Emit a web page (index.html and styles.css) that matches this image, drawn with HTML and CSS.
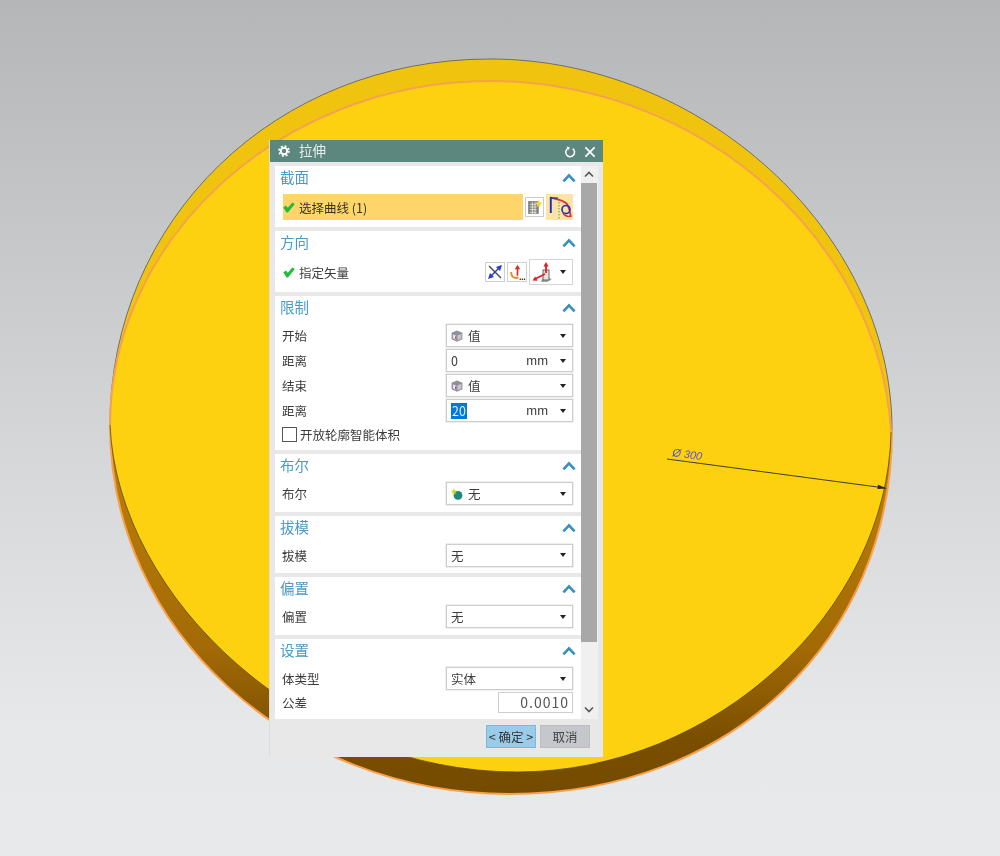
FILE: index.html
```html
<!DOCTYPE html>
<html lang="zh-CN">
<head>
    <meta charset="UTF-8">
    <meta name="viewport" content="width=device-width, initial-scale=1.0">
    <title>拉伸</title>
    <link rel="stylesheet" href="styles.css">
</head>
<body>

    <svg width="0" height="0" class="defs">
        <symbol id="check" viewBox="0 0 12 11">
            <path d="M0.3 5.6 L2.9 3.6 L4.8 5.8 L9.4 0.4 L11.8 2 L5 10.6 L3.6 10.6 Z" fill="#1fbb3a"/>
        </symbol>
        <symbol id="chevron" viewBox="0 0 14 10">
            <path d="M1.4 8.4 L7 2.4 L12.6 8.4" fill="none" stroke="#3a8fbb" stroke-width="2.7"/>
        </symbol>
        <symbol id="cube" viewBox="0 0 12 12">
            <path d="M6 0.4 L11.4 2.8 L11.4 9.2 L6 11.8 L0.6 9.2 L0.6 2.8 Z" fill="#8f9096"/>
            <path d="M1.6 3.8 L5.6 5.6 L5.6 10.4 L1.6 8.6 Z" fill="#eceaf0" stroke="#6d7fa8" stroke-width="0.6"/>
            <path d="M6.4 5.6 L10.4 3.8 L10.4 8.6 L6.4 10.4 Z" fill="#c2c6d0"/>
            <path d="M4 6.2 L5.4 6.8 L5.4 9.4 L4 8.8 Z" fill="#d9493f"/>
        </symbol>
    </svg>

    <!-- model behind the dialog -->
    <svg class="scene" width="1000" height="856" viewBox="0 0 1000 856">
        <defs>
            <linearGradient id="sky" x1="0" y1="0" x2="0" y2="1">
                <stop offset="0" stop-color="#b5b6b8"/>
                <stop offset="0.5" stop-color="#d4d5d7"/>
                <stop offset="0.85" stop-color="#e7e8ea"/>
                <stop offset="1" stop-color="#e8e9eb"/>
            </linearGradient>
            <linearGradient id="side" x1="0" y1="430" x2="0" y2="794" gradientUnits="userSpaceOnUse">
                <stop offset="0" stop-color="#c08204"/>
                <stop offset="0.6" stop-color="#a36a05"/>
                <stop offset="0.85" stop-color="#7a4e00"/>
                <stop offset="1" stop-color="#744b00"/>
            </linearGradient>
        </defs>
        <rect width="1000" height="856" fill="url(#sky)"/>
        <g class="soft">
            <!-- lower side wall -->
            <path d="M892 430 C892 640 730 794 510 794 C290 794 110 630 110 425 Z" fill="url(#side)"/>
            <path d="M892 430 C892 640 730 794 510 794 C290 794 110 630 110 425" fill="none" stroke="#f8a04a" stroke-width="2"/>
            <!-- upper band -->
            <path d="M110 425 C110 220 275 59 490 59 C700 59 892 230 892 430 Z" fill="#f0c40e"/>
            <path d="M110 425 C110 220 275 59 490 59 C700 59 892 230 892 430" fill="none" stroke="#6e6e66" stroke-width="1"/>
            <!-- front face -->
            <path d="M110 425 C110 240 280 81 490 81 C700 81 880 240 891 432 C888 610 715 772 517 772 C305 772 118 600 110 425 Z" fill="#fed110"/>
            <path d="M110 425 C110 240 280 81 490 81 C700 81 880 240 891 432" fill="none" stroke="#f4a24e" stroke-width="2"/>
            <path d="M891 432 C888 610 715 772 517 772 C305 772 118 600 110 425" fill="none" stroke="#5a4a10" stroke-width="0.8"/>
            <!-- dimension -->
            <line x1="667" y1="459" x2="885" y2="488" stroke="#3d3d2e" stroke-width="1"/>
            <path d="M887 488.4 L878 484.8 L877.4 489 Z" fill="#1f2a3a"/>
            <text x="672" y="456" class="dim" transform="rotate(8 672 456)">Ø 300</text>
        </g>
    </svg>

    <div class="dialog">
        <div class="titlebar">
            <svg class="gear" width="12" height="12" viewBox="0 0 12 12">
                <circle cx="6" cy="6" r="3.2" fill="none" stroke="#fff" stroke-width="2"/>
                <circle cx="6" cy="6" r="5" fill="none" stroke="#fff" stroke-width="1.6" stroke-dasharray="2 1.93"/>
            </svg>
            <span class="title-text">拉伸</span>
            <svg class="title-btn" width="12" height="12" viewBox="0 0 12 12">
                <path d="M4 2.4 A4.4 4.4 0 1 0 8.6 2.6" fill="none" stroke="#fff" stroke-width="1.5"/>
                <path d="M2.6 0.6 L6 1.6 L4 4.6 Z" fill="#fff"/>
            </svg>
            <svg class="title-btn" width="12" height="12" viewBox="0 0 12 12">
                <path d="M1.4 1.4 L10.6 10.6 M10.6 1.4 L1.4 10.6" fill="none" stroke="#fff" stroke-width="1.8"/>
            </svg>
        </div>

        <div class="dialog-body">
            <div class="panels">

                <section class="group">
                    <div class="group-head">截面<svg class="chev"><use href="#chevron"/></svg></div>
                    <div class="pick-row">
                        <div class="pick-bar">
                            <svg class="check"><use href="#check"/></svg>
                            <span>选择曲线 (1)</span>
                        </div>
                        <div class="tool-btn">
                            <svg width="17" height="17" viewBox="0 0 16 16">
                                <rect x="2" y="2" width="10" height="12" fill="#7f837c"/>
                                <path d="M3.5 5 H10 M3.5 7.5 H10 M3.5 10 H10 M3.5 12.5 H10 M6 3 V14 M8.5 3 V14" stroke="#e8e8e0" stroke-width="0.8"/>
                                <path d="M12 0.6 L13 3 L15.4 3.6 L13.4 5.2 L14 7.6 L12 6.2 L10 7.6 L10.6 5.2 L8.6 3.6 L11 3 Z" fill="#f4d83a"/>
                            </svg>
                        </div>
                        <div class="curve-btn">
                            <svg width="27" height="26" viewBox="0 0 27 26">
                                <path d="M13 8 V25" stroke="#6fae55" stroke-width="1.2" stroke-dasharray="1.6 1.4"/>
                                <path d="M4 3.5 C10 5 18 6 21 10 C23 13 24 18 25 23" stroke="#d8343a" stroke-width="1.7" fill="none"/>
                                <path d="M4.8 3 V19" stroke="#1f2db8" stroke-width="1.9" fill="none"/>
                                <path d="M4 4 H12" stroke="#1f2db8" stroke-width="1.2" fill="none"/>
                                <circle cx="20" cy="15.5" r="4" stroke="#1f2db8" stroke-width="1.6" fill="none"/>
                                <path d="M17 19 C19 22 22 23 25 22" stroke="#d8343a" stroke-width="1.5" fill="none"/>
                            </svg>
                        </div>
                    </div>
                </section>

                <section class="group">
                    <div class="group-head">方向<svg class="chev"><use href="#chevron"/></svg></div>
                    <div class="vector-row">
                        <svg class="check"><use href="#check"/></svg>
                        <span class="vector-text">指定矢量</span>
                        <div class="small-btn">
                            <svg width="16" height="16" viewBox="0 0 16 16">
                                <path d="M2 2 L14 14" stroke="#4a4a4a" stroke-width="1.4"/>
                                <path d="M14 2 L3 13" stroke="#2240c8" stroke-width="1.4"/>
                                <path d="M15 1 L9 3 L13 7 Z M1 15 L3 9 L7 13 Z" fill="#2240c8"/>
                            </svg>
                        </div>
                        <div class="small-btn">
                            <svg width="17" height="17" viewBox="0 0 16 16">
                                <path d="M8 11 V4" stroke="#d8302a" stroke-width="1.6"/>
                                <path d="M8 0.6 L5.4 5 H10.6 Z" fill="#d8302a"/>
                                <path d="M2 7.5 C2 12 5 14 9 12.6" stroke="#f08a2a" stroke-width="1.9" fill="none"/>
                                <path d="M10 14.4 H11.2 M12 14.4 H13.2 M14 14.4 H15.2" stroke="#333" stroke-width="1.3"/>
                            </svg>
                        </div>
                        <div class="vector-drop">
                            <svg width="24" height="24" viewBox="0 0 24 24">
                                <path d="M11 19 L15 17 L21 19 L16 22 L10 22 Z" fill="#9fa29a"/>
                                <rect x="12" y="10" width="6" height="10" fill="#e4e4de" stroke="#666" stroke-width="1"/>
                                <path d="M15 13 V5" stroke="#d8202a" stroke-width="1.8"/>
                                <path d="M15 2 L12.4 6.6 H17.6 Z" fill="#d8202a"/>
                                <path d="M14 14 L4 19" stroke="#d8202a" stroke-width="1.8"/>
                                <path d="M1.5 20.5 L6.6 20.8 L4.2 16.6 Z" fill="#d8202a"/>
                            </svg>
                            <i class="arrow"></i>
                        </div>
                    </div>
                </section>

                <section class="group">
                    <div class="group-head">限制<svg class="chev"><use href="#chevron"/></svg></div>
                    <div class="field-list">
                        <div class="field">
                            <label>开始</label>
                            <div class="drop"><svg class="drop-icon"><use href="#cube"/></svg><span>值</span><i class="arrow"></i></div>
                        </div>
                        <div class="field">
                            <label>距离</label>
                            <div class="drop"><span>0</span><span class="unit">mm</span><i class="arrow"></i></div>
                        </div>
                        <div class="field">
                            <label>结束</label>
                            <div class="drop"><svg class="drop-icon"><use href="#cube"/></svg><span>值</span><i class="arrow"></i></div>
                        </div>
                        <div class="field">
                            <label>距离</label>
                            <div class="drop"><span class="selected">20</span><span class="unit">mm</span><i class="arrow"></i></div>
                        </div>
                    </div>
                    <div class="check-row">
                        <span class="checkbox"></span>
                        <span>开放轮廓智能体积</span>
                    </div>
                </section>

                <section class="group single">
                    <div class="group-head">布尔<svg class="chev"><use href="#chevron"/></svg></div>
                    <div class="field">
                        <label>布尔</label>
                        <div class="drop">
                            <svg class="drop-icon" viewBox="0 0 12 12">
                                <circle cx="7" cy="7.4" r="4.4" fill="#1f8a76"/>
                                <path d="M3 0.2 L3.9 2.4 L6.2 2.8 L4.4 4.2 L4.8 6.6 L3 5.2 L1.2 6.6 L1.6 4.2 L-0.2 2.8 L2.1 2.4 Z" fill="#c6d92e"/>
                            </svg>
                            <span>无</span><i class="arrow"></i>
                        </div>
                    </div>
                </section>

                <section class="group single">
                    <div class="group-head">拔模<svg class="chev"><use href="#chevron"/></svg></div>
                    <div class="field">
                        <label>拔模</label>
                        <div class="drop"><span>无</span><i class="arrow"></i></div>
                    </div>
                </section>

                <section class="group single">
                    <div class="group-head">偏置<svg class="chev"><use href="#chevron"/></svg></div>
                    <div class="field">
                        <label>偏置</label>
                        <div class="drop"><span>无</span><i class="arrow"></i></div>
                    </div>
                </section>

                <section class="group">
                    <div class="group-head">设置<svg class="chev"><use href="#chevron"/></svg></div>
                    <div class="field-list">
                        <div class="field">
                            <label>体类型</label>
                            <div class="drop"><span>实体</span><i class="arrow"></i></div>
                        </div>
                        <div class="field">
                            <label>公差</label>
                            <div class="num-box">0.0010</div>
                        </div>
                    </div>
                </section>

            </div>

            <div class="scrollbar">
                <svg class="scroll-arrow" width="17" height="17" viewBox="0 0 17 17">
                    <path d="M4 10.5 L8 6.5 L12 10.5" fill="none" stroke="#555" stroke-width="1.6"/>
                </svg>
                <div class="scroll-thumb"></div>
                <svg class="scroll-arrow bottom" width="17" height="17" viewBox="0 0 17 17">
                    <path d="M4 5.5 L8 9.5 L12 5.5" fill="none" stroke="#555" stroke-width="1.6"/>
                </svg>
            </div>
        </div>

        <div class="footer">
            <button class="btn primary">&lt; 确定 &gt;</button>
            <button class="btn">取消</button>
        </div>
    </div>

</body>
</html>
```

FILE: styles.css
```css
html, body {
    margin: 0;
    padding: 0;
}
body {
    width: 1000px;
    height: 856px;
    overflow: hidden;
    position: relative;
    font-family: "Noto Sans CJK SC", "Noto Sans", sans-serif;
    font-size: 12.5px;
    color: #3c3c3c;
}
.defs {
    position: absolute;
}
.scene {
    position: absolute;
    left: 0;
    top: 0;
    display: block;
}
.soft {
    filter: blur(0.4px);
}
.dim {
    font-family: "Liberation Sans", sans-serif;
    font-style: italic;
    font-size: 11px;
    fill: #5a50d8;
}

/* dialog */
.dialog {
    position: absolute;
    left: 269px;
    top: 140px;
    width: 334px;
    height: 617px;
    box-sizing: border-box;
    background: #e8e8e8;
    border-left: 1px solid #dcdcdc;
    display: flex;
    flex-direction: column;
    filter: blur(0.5px);
}
.titlebar {
    height: 22px;
    background: #5c877f;
    color: #e6efed;
    font-size: 13.5px;
    display: flex;
    align-items: center;
    padding: 0 7px 0 8px;
    flex-shrink: 0;
}
.gear {
    margin-right: 9px;
}
.title-text {
    flex: 1;
    padding-bottom: 2px;
}
.title-btn {
    margin-left: 8px;
    margin-top: 1px;
}
.dialog-body {
    display: flex;
    padding: 4px 5px 0 5px;
}
.panels {
    width: 306px;
    height: 553px;
    overflow: hidden;
    display: flex;
    flex-direction: column;
    gap: 4px;
}
.group {
    background: #fff;
    padding-bottom: 7px;
    flex-shrink: 0;
}
.group.single {
    padding-bottom: 6.7px;
}
.group-head {
    height: 24px;
    line-height: 22px;
    padding-left: 5px;
    font-size: 14.5px;
    color: #4a9ac4;
    position: relative;
}
.chev {
    position: absolute;
    right: 5px;
    top: 7px;
    width: 14px;
    height: 10px;
}

/* section row */
.pick-row {
    display: flex;
    gap: 2px;
    align-items: center;
    margin: 4px 8px 0 8px;
}
.pick-bar {
    flex: 1;
    height: 26px;
    background: #fdd56a;
    display: flex;
    align-items: center;
    padding-left: 0;
    color: #3a3324;
}
.check {
    width: 12px;
    height: 11px;
    margin-right: 4px;
    flex-shrink: 0;
}
.tool-btn {
    width: 19px;
    height: 20px;
    box-sizing: border-box;
    border: 1px solid #ccc;
    background: #fff;
    display: flex;
    align-items: center;
    justify-content: center;
}
.curve-btn {
    width: 27px;
    height: 26px;
    background: #fce3a8;
}
.vector-row {
    display: flex;
    align-items: center;
    height: 26px;
    margin: 4px 8px 0 8px;
}
.vector-text {
    flex: 1;
}
.small-btn {
    width: 20px;
    height: 20px;
    box-sizing: border-box;
    border: 1px solid #d0d0d0;
    background: #fff;
    margin-right: 2px;
    display: flex;
    align-items: center;
    justify-content: center;
}
.vector-drop {
    width: 44px;
    height: 26px;
    box-sizing: border-box;
    border: 1px solid #d4d4d4;
    background: #fff;
    display: flex;
    align-items: center;
    padding: 0 6px 0 1px;
    justify-content: space-between;
}

/* label + dropdown */
.field-list {
    display: flex;
    flex-direction: column;
    gap: 2px;
    padding-top: 4px;
}
.field {
    display: flex;
    justify-content: space-between;
    align-items: center;
    margin: 4px 8px 0 7px;
}
.field-list .field {
    margin-top: 0;
}
.drop {
    width: 127px;
    height: 23px;
    box-sizing: border-box;
    border: 1px solid #cdcdcd;
    box-shadow: 0 0 0 0.5px #e0e0e0;
    background: #fff;
    display: flex;
    align-items: center;
    padding: 0 6px 0 4px;
}
.drop-icon {
    width: 12px;
    height: 12px;
    margin-right: 5px;
    flex-shrink: 0;
}
.unit {
    margin-left: auto;
    margin-right: 12px;
    font-family: "Liberation Sans", sans-serif;
    font-size: 13px;
}
.selected {
    background: #0078d7;
    color: #dfeefa;
    padding: 0 1px;
    line-height: 16px;
}
.arrow {
    width: 0;
    height: 0;
    border-left: 3.5px solid transparent;
    border-right: 3.5px solid transparent;
    border-top: 4px solid #222;
    margin-left: auto;
    flex-shrink: 0;
}
.unit + .arrow {
    margin-left: 0;
}
.num-box {
    width: 75px;
    height: 21px;
    box-sizing: border-box;
    border: 1px solid #cdcdcd;
    text-align: right;
    padding-right: 3px;
    line-height: 19px;
    font-size: 14px;
    letter-spacing: 1px;
    color: #555;
}
.check-row {
    display: flex;
    align-items: center;
    margin: 5px 0 1px 7px;
    height: 15px;
}
.checkbox {
    width: 15px;
    height: 15px;
    box-sizing: border-box;
    border: 1px solid #555;
    background: #fff;
    margin-right: 3px;
}

/* scrollbar */
.scrollbar {
    width: 17px;
    height: 553px;
    background: #f0f0f0;
    position: relative;
    flex-shrink: 0;
}
.scroll-arrow {
    display: block;
}
.scroll-arrow.bottom {
    position: absolute;
    bottom: 0;
    left: 0;
}
.scroll-thumb {
    margin: 0 1px 0 0;
    height: 459px;
    background: #a8a8a8;
}

/* bottom buttons */
.footer {
    flex: 1;
    display: flex;
    justify-content: flex-end;
    gap: 4px;
    padding: 6px 13px 0 0;
}
.btn {
    width: 50px;
    height: 23px;
    box-sizing: border-box;
    padding: 0;
    border: 1px solid #bdbec2;
    background: #c6c7cc;
    font-family: "Noto Sans CJK SC", sans-serif;
    font-size: 12.5px;
    color: #444;
}
.btn.primary {
    background: #9acbe8;
    border-color: #7ab8dd;
    color: #333;
}
```
